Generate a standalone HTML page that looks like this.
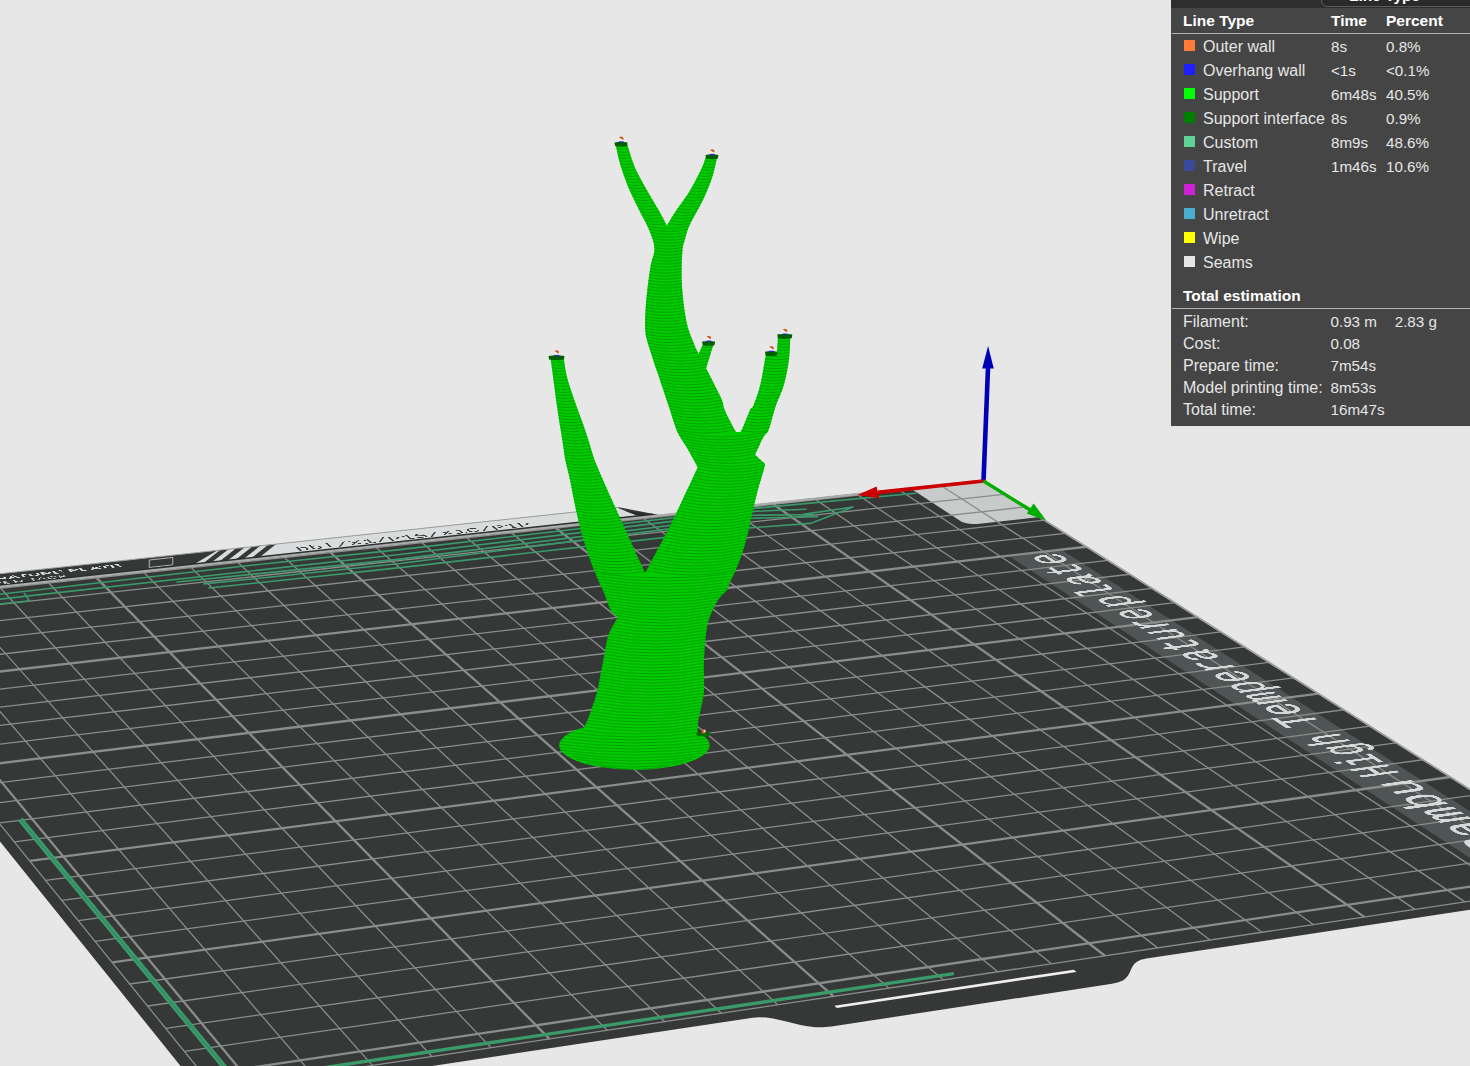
<!DOCTYPE html>
<html><head><meta charset="utf-8"><style>
html,body{margin:0;padding:0;width:1470px;height:1066px;overflow:hidden;}
#root{position:relative;width:1470px;height:1066px;overflow:hidden;background:#e7e7e7;}
body{width:1470px;height:1066px;overflow:hidden;background:#e7e7e7;position:relative;font-family:"Liberation Sans",sans-serif;}
.p3{position:absolute;left:0;top:0;width:2640px;height:2820px;transform-origin:0 0;transform:matrix3d(-0.4468236041,0.0280844401,0,-3.460906695e-05,0.1227333781,0.08839275091,0,-7.627138853e-05,0,0,1,0,982.2217173,470.2475524,0,1.010190839);}
.ov{position:absolute;left:0;top:0;}
#leg{position:absolute;left:1171px;top:0;width:299px;height:426px;background:#454545;color:#e6e6e6;overflow:hidden}
#leg .t{position:absolute;white-space:nowrap;font-size:16px;line-height:16px;}
#leg .b{font-weight:bold;font-size:15.5px;color:#fff}
#leg .sw{position:absolute;width:11px;height:11px;left:13px;}
#leg .n{font-size:15.2px}
</style></head><body><div id="root">
<svg class="ov" width="1470" height="1066" viewBox="0 0 1470 1066"><polygon points="980.98,480.07 659.04,514.93 618.91,507.30 -198.34,594.99 207.71,1099.78 752.72,1017.78 759.57,1017.22 766.31,1017.52 773.00,1018.47 779.70,1019.88 786.46,1021.57 793.35,1023.33 800.42,1024.98 807.71,1026.31 815.28,1027.14 823.17,1027.27 831.42,1026.49 1112.03,983.80 1118.34,982.36 1122.89,980.38 1126.05,977.97 1128.20,975.27 1129.71,972.40 1130.96,969.48 1132.33,966.65 1134.19,964.01 1136.91,961.70 1140.87,959.84 1146.44,958.54 1623.64,886.74" fill="#363838" /><polygon points="637.85,515.87 616.74,507.54 217.18,550.41 194.98,563.77" fill="#d9dcdc" /><polygon points="637.85,515.87 657.64,514.63 624.65,510.85" fill="#2a2c2c" /><polygon points="258.31,558.31 249.95,559.22 267.96,544.96 276.23,544.07" fill="#363838" /><polygon points="242.28,560.05 233.91,560.95 252.08,546.66 260.37,545.77" fill="#363838" /><polygon points="226.22,561.79 217.82,562.69 236.15,548.37 244.47,547.48" fill="#363838" /><polygon points="210.11,563.53 201.69,564.44 220.19,550.08 228.52,549.19" fill="#363838" /><polygon points="610.63,510.42 584.42,513.24 592.70,519.55 618.98,516.71" fill="none" stroke="#363838" stroke-width="1.3"/><polygon points="172.81,557.48 149.40,559.99 149.20,567.47 172.72,564.93" fill="none" stroke="#d0d4d4" stroke-width="0.8"/><polygon points="1062.67,550.58 1009.86,556.66 1541.54,904.93 1602.18,895.78" fill="#4f5555" /><polygon points="980.98,480.07 909.61,487.80 960.83,521.28 960.83,521.28 962.07,521.95 963.66,522.55 965.55,523.07 967.69,523.49 970.00,523.80 972.43,523.99 974.89,524.06 977.30,524.00 979.60,523.81 1039.50,517.11" fill="#c9caca" /><g stroke="#8a8d8b"><line x1="983.55" y1="481.70" x2="1612.61" y2="879.76" stroke-width="1.3"/><line x1="983.55" y1="481.70" x2="-175.91" y2="607.41" stroke-width="1.3"/><line x1="942.12" y1="486.19" x2="1563.81" y2="887.06" stroke-width="1.3"/><line x1="1003.47" y1="494.31" x2="-163.81" y2="622.32" stroke-width="1.3"/><line x1="900.41" y1="490.71" x2="1514.59" y2="894.43" stroke-width="1.3"/><line x1="1023.71" y1="507.11" x2="-151.51" y2="637.48" stroke-width="1.3"/><line x1="858.41" y1="495.26" x2="1464.94" y2="901.87" stroke-width="1.3"/><line x1="1044.26" y1="520.12" x2="-139.00" y2="652.90" stroke-width="1.3"/><line x1="816.11" y1="499.85" x2="1414.86" y2="909.36" stroke-width="1.3"/><line x1="1065.13" y1="533.33" x2="-126.27" y2="668.58" stroke-width="1.3"/><line x1="773.52" y1="504.47" x2="1364.33" y2="916.93" stroke-width="2.3"/><line x1="1086.34" y1="546.74" x2="-113.32" y2="684.55" stroke-width="2.3"/><line x1="730.62" y1="509.12" x2="1313.36" y2="924.56" stroke-width="1.3"/><line x1="1107.88" y1="560.38" x2="-100.14" y2="700.79" stroke-width="1.3"/><line x1="687.42" y1="513.80" x2="1261.94" y2="932.25" stroke-width="1.3"/><line x1="1129.78" y1="574.23" x2="-86.72" y2="717.32" stroke-width="1.3"/><line x1="643.91" y1="518.52" x2="1210.06" y2="940.02" stroke-width="1.3"/><line x1="1152.02" y1="588.31" x2="-73.07" y2="734.15" stroke-width="1.3"/><line x1="600.10" y1="523.27" x2="1157.71" y2="947.86" stroke-width="1.3"/><line x1="1174.64" y1="602.62" x2="-59.17" y2="751.28" stroke-width="1.3"/><line x1="555.96" y1="528.06" x2="1104.89" y2="955.76" stroke-width="2.3"/><line x1="1197.62" y1="617.16" x2="-45.01" y2="768.73" stroke-width="2.3"/><line x1="511.51" y1="532.88" x2="1051.60" y2="963.74" stroke-width="1.3"/><line x1="1220.99" y1="631.95" x2="-30.59" y2="786.49" stroke-width="1.3"/><line x1="466.74" y1="537.73" x2="997.82" y2="971.79" stroke-width="1.3"/><line x1="1244.75" y1="646.98" x2="-15.91" y2="804.59" stroke-width="1.3"/><line x1="421.64" y1="542.62" x2="943.56" y2="979.91" stroke-width="1.3"/><line x1="1268.91" y1="662.27" x2="-0.95" y2="823.03" stroke-width="1.3"/><line x1="376.22" y1="547.55" x2="888.80" y2="988.11" stroke-width="1.3"/><line x1="1293.49" y1="677.83" x2="14.30" y2="841.82" stroke-width="1.3"/><line x1="330.47" y1="552.51" x2="833.53" y2="996.38" stroke-width="2.3"/><line x1="1318.49" y1="693.64" x2="29.83" y2="860.96" stroke-width="2.3"/><line x1="284.37" y1="557.50" x2="777.75" y2="1004.73" stroke-width="1.3"/><line x1="1343.92" y1="709.74" x2="45.67" y2="880.48" stroke-width="1.3"/><line x1="237.94" y1="562.54" x2="721.46" y2="1013.16" stroke-width="1.3"/><line x1="1369.80" y1="726.11" x2="61.82" y2="900.38" stroke-width="1.3"/><line x1="191.17" y1="567.61" x2="664.64" y2="1021.67" stroke-width="1.3"/><line x1="1396.14" y1="742.78" x2="78.28" y2="920.67" stroke-width="1.3"/><line x1="144.05" y1="572.72" x2="607.29" y2="1030.25" stroke-width="1.3"/><line x1="1422.95" y1="759.74" x2="95.07" y2="941.36" stroke-width="1.3"/><line x1="96.58" y1="577.86" x2="549.40" y2="1038.92" stroke-width="2.3"/><line x1="1450.23" y1="777.01" x2="112.20" y2="962.47" stroke-width="2.3"/><line x1="48.76" y1="583.05" x2="490.96" y2="1047.66" stroke-width="1.3"/><line x1="1478.02" y1="794.59" x2="129.68" y2="984.01" stroke-width="1.3"/><line x1="0.58" y1="588.27" x2="431.96" y2="1056.50" stroke-width="1.3"/><line x1="1506.31" y1="812.50" x2="147.51" y2="1005.99" stroke-width="1.3"/><line x1="-47.97" y1="593.54" x2="372.41" y2="1065.41" stroke-width="1.3"/><line x1="1535.13" y1="830.73" x2="165.72" y2="1028.42" stroke-width="1.3"/><line x1="-96.88" y1="598.84" x2="312.28" y2="1074.41" stroke-width="1.3"/><line x1="1564.49" y1="849.31" x2="184.30" y2="1051.33" stroke-width="1.3"/><line x1="-146.16" y1="604.18" x2="251.57" y2="1083.50" stroke-width="2.3"/><line x1="1594.40" y1="868.23" x2="203.28" y2="1074.72" stroke-width="2.3"/><line x1="-175.91" y1="607.41" x2="214.86" y2="1088.99" stroke-width="1.3"/><line x1="1612.61" y1="879.76" x2="214.86" y2="1088.99" stroke-width="1.3"/></g><line x1="1623.64" y1="886.74" x2="980.98" y2="480.07" stroke="#9ea2a0" stroke-width="1.6"/><line x1="653.10" y1="514.22" x2="-189.96" y2="605.40" stroke="#2c2e2e" stroke-width="1.3"/><line x1="981.77" y1="480.57" x2="-188.42" y2="607.32" stroke="#a9acab" stroke-width="2.2"/><line x1="618.91" y1="507.30" x2="-198.34" y2="594.99" stroke="#9ea2a0" stroke-width="1.0"/><g stroke="#3a9a6a" stroke-linejoin="round" stroke-linecap="round"><line x1="20.26" y1="819.32" x2="239.36" y2="1085.33" stroke-width="5.5" stroke-linecap="butt"/><line x1="20.26" y1="819.32" x2="239.36" y2="1085.33" stroke-width="0.8" stroke="#2f7a55" stroke-linecap="butt"/><line x1="235.63" y1="1080.80" x2="952.29" y2="973.81" stroke-width="3.4"/><polyline fill="none" stroke-width="1.6" points="-2,594.5 240,566.5 400,549.6 753.5,508.4 915.9,493.2"/><polyline fill="none" stroke-width="1.6" points="-2,599.4 240,572.2 400,554.5 753.5,511.4 805.9,509.2"/><polyline fill="none" stroke-width="1.6" points="-2,604.2 29.4,600.8 24.5,593.5"/><polyline fill="none" stroke-width="1.6" points="177,582 400,559.1 752,515.2 813.4,514.7"/><polyline fill="none" stroke-width="1.6" points="204,583.9 400,563.5 751.2,518.2 817.8,516.7"/><polyline fill="none" stroke-width="1.6" points="209,588 400,567.6 749,527.9 810.4,523.4 853,507 802.9,514.4"/></g><polygon points="834.30,1005.70 1073.70,969.67 1076.51,971.90 836.91,1008.01" fill="#eeeeee" /></svg>
<div class="p3"><svg width="2640" height="2820" viewBox="-3.0 -12.0 264.0 282.0" style="position:absolute;left:0;top:0"><g transform="translate(156,-3.2) scale(-1,1)"><text x="0" y="0" font-family="Liberation Mono" font-size="4.0" fill="#3a3c3c" textLength="52" lengthAdjust="spacingAndGlyphs">bbl/X1/P1S/X1C/P1P</text></g><g transform="translate(255,-5.4) scale(-1,1)"><text x="0" y="0" font-family="Liberation Sans" font-weight="bold" font-size="2.8" fill="#d8dcdc" textLength="62" lengthAdjust="spacingAndGlyphs">BAMBU HIGH TEMPERATURE PLATE</text></g><g transform="translate(255,-2.4) scale(-1,1)"><text x="0" y="0" font-family="Liberation Sans" font-size="2.4" fill="#c8cccc" textLength="50" lengthAdjust="spacingAndGlyphs">HIGH TEMP PLATE SUPER TACK</text></g><g transform="matrix(0,-1,-1,0,7.7,88.8)"><text x="0" y="0" font-family="Liberation Mono" font-size="11.8" fill="#d5d9d9" stroke="#d5d9d9" stroke-width="0.12" textLength="37.599999999999994" lengthAdjust="spacingAndGlyphs">plate</text></g><g transform="matrix(0,-1,-1,0,7.7,165.9)"><text x="0" y="0" font-family="Liberation Mono" font-size="11.8" fill="#d5d9d9" stroke="#d5d9d9" stroke-width="0.12" textLength="75.5" lengthAdjust="spacingAndGlyphs">Temperature</text></g><g transform="matrix(0,-1,-1,0,7.7,195.2)"><text x="0" y="0" font-family="Liberation Mono" font-size="11.8" fill="#d5d9d9" stroke="#d5d9d9" stroke-width="0.12" textLength="24.399999999999977" lengthAdjust="spacingAndGlyphs">High</text></g><g transform="matrix(0,-1,-1,0,7.7,236.5)"><text x="0" y="0" font-family="Liberation Mono" font-size="11.8" fill="#d5d9d9" stroke="#d5d9d9" stroke-width="0.12" textLength="38.69999999999999" lengthAdjust="spacingAndGlyphs">Bambu</text></g></svg></div>
<svg class="ov" width="1470" height="1066" viewBox="0 0 1470 1066">
<defs>
<pattern id="stripes" width="6" height="3" patternUnits="userSpaceOnUse"><rect width="6" height="3" fill="#00cc00"/><rect y="2.15" width="6" height="0.85" fill="#009a00"/></pattern>
</defs>

<line x1="983.5" y1="481" x2="988" y2="368" stroke="#0000b4" stroke-width="4.6"/>
<path d="M982.2 368.5 L993.8 368.5 L988.1 346 Z" fill="#0000b4"/>
<path d="M983.4 479.2 L983.7 482.8 L878 494.2 L877.7 490.6 Z" fill="#cc0000"/>
<path d="M876.6 486.6 L879.2 498.2 L857.4 495 Z" fill="#cc0000"/>
<path d="M984.3 479.6 L982.6 482.4 L1030.4 511.9 L1032.1 509.1 Z" fill="#00ae00"/>
<path d="M1026.8 513.6 L1033.6 503.4 L1046.2 520.4 Z" fill="#00ae00"/>

<clipPath id="tc"><path d="M615.0 143.5 L627.0 143.5 L628.2 147.4 L629.4 151.4 L630.6 155.3 L631.8 159.2 L633.2 163.1 L634.7 167.0 L636.4 170.8 L638.3 174.6 L640.3 178.3 L642.3 182.0 L644.4 185.7 L646.5 189.4 L648.7 193.2 L651.0 197.2 L653.3 201.1 L655.6 204.9 L657.7 208.5 L659.6 211.7 L661.1 214.5 L662.4 216.9 L663.6 219.1 L664.6 221.2 L665.7 223.3 L666.8 225.5 L668.2 223.3 L669.5 221.2 L670.7 219.1 L672.1 216.8 L673.6 214.4 L675.4 211.7 L677.5 208.6 L679.9 205.3 L682.4 201.7 L685.0 198.1 L687.5 194.4 L689.8 190.7 L692.0 186.9 L694.2 183.0 L696.3 179.0 L698.3 175.1 L700.1 171.5 L701.6 168.3 L702.8 165.7 L703.7 163.5 L704.4 161.5 L704.9 159.7 L705.5 157.9 L706.2 156.0 L718.0 156.0 L718.0 155.8 L718.0 155.4 L718.0 155.0 L717.9 154.8 L717.8 155.2 L717.4 156.5 L716.8 158.8 L716.1 161.9 L715.3 165.6 L714.3 169.6 L713.3 173.7 L712.1 177.5 L710.9 181.1 L709.5 184.8 L708.0 188.5 L706.5 192.2 L704.8 196.0 L703.0 199.9 L700.9 204.0 L698.6 208.4 L696.2 212.8 L693.8 217.1 L691.6 221.1 L689.8 224.8 L688.4 228.0 L687.4 231.0 L686.5 233.7 L685.8 236.1 L685.2 238.4 L684.6 240.6 L684.1 242.4 L683.6 243.6 L683.3 244.7 L683.0 245.9 L682.7 247.6 L682.5 250.0 L682.3 253.3 L682.0 257.3 L681.8 261.7 L681.7 266.3 L681.6 270.9 L681.6 275.3 L681.7 279.5 L681.9 283.8 L682.1 288.0 L682.5 292.2 L682.8 296.5 L683.3 300.7 L683.8 305.0 L684.4 309.4 L685.1 313.8 L685.8 318.1 L686.6 322.2 L687.5 326.0 L688.5 329.6 L689.7 333.0 L690.9 336.3 L692.1 339.3 L693.3 342.1 L694.3 344.6 L695.2 346.7 L695.9 348.4 L696.6 349.8 L697.2 351.1 L697.8 352.5 L698.5 353.9 L703.6 342.9 L702.7 342.5 L714.6 342.5 L713.7 343.7 L706.1 368.2 L708.8 373.5 L711.6 379.0 L714.4 384.6 L717.1 389.9 L719.4 394.6 L721.3 398.6 L722.5 401.5 L723.1 403.5 L723.3 405.0 L723.5 406.3 L723.9 407.8 L724.7 410.0 L726.1 413.0 L727.8 416.7 L729.8 420.6 L731.7 424.3 L733.4 427.6 L734.8 430.0 L735.8 431.4 L736.4 432.0 L736.9 432.1 L737.3 432.0 L737.7 431.9 L738.2 432.0 L738.7 431.9 L739.1 432.0 L739.6 432.1 L740.1 432.0 L740.7 431.4 L741.6 430.0 L742.8 427.5 L744.2 424.1 L745.8 420.2 L747.4 416.2 L748.8 412.7 L750.0 410.0 L750.8 408.5 L751.4 407.9 L751.8 407.7 L752.2 407.5 L752.7 406.9 L753.4 405.4 L754.3 403.1 L755.5 400.2 L756.6 396.9 L757.9 393.3 L759.1 389.3 L760.2 385.1 L761.3 380.2 L762.4 374.4 L763.5 368.3 L764.5 362.5 L765.4 357.5 L766.0 353.9 L766.3 351.9 L766.4 351.1 L766.4 351.2 L766.2 351.7 L766.1 352.1 L766.0 352.2 L777.0 352.2 L778.0 336.0 L777.9 334.4 L791.4 334.4 L791.3 334.4 L791.1 334.2 L791.0 333.9 L790.9 333.9 L790.7 334.5 L790.5 336.1 L790.3 338.8 L790.1 342.3 L790.0 346.5 L789.7 351.0 L789.4 355.5 L788.9 359.8 L788.3 364.0 L787.6 368.2 L786.8 372.6 L785.9 376.9 L784.9 381.1 L783.8 385.1 L782.6 388.9 L781.2 392.6 L779.7 396.2 L778.2 399.7 L776.7 403.3 L775.4 407.0 L774.2 411.0 L773.0 415.2 L771.8 419.4 L770.7 423.5 L769.6 427.1 L768.6 430.0 L767.7 432.0 L766.9 433.1 L766.2 433.8 L765.4 434.5 L764.5 435.4 L763.5 437.0 L762.3 439.3 L760.9 442.1 L759.5 445.2 L758.0 448.4 L756.5 451.6 L755.1 454.7 L765.2 464.0 L765.0 465.0 L764.8 465.9 L764.6 466.8 L764.3 467.8 L764.0 469.1 L763.5 470.8 L762.9 473.0 L762.1 475.6 L761.2 478.4 L760.3 481.4 L759.4 484.6 L758.5 487.7 L757.7 490.8 L756.8 494.1 L756.0 497.4 L755.1 500.9 L754.3 504.4 L753.4 508.0 L752.6 511.7 L751.8 515.6 L750.9 519.6 L750.1 523.6 L749.2 527.6 L748.3 531.6 L747.3 535.6 L746.2 539.7 L745.1 543.8 L743.9 547.8 L742.7 551.7 L741.6 555.2 L740.4 558.5 L739.3 561.6 L738.1 564.5 L736.9 567.2 L735.8 569.8 L734.8 572.1 L733.9 574.2 L733.0 576.0 L732.2 577.6 L731.4 579.1 L730.7 580.5 L730.0 582.0 L729.5 583.4 L729.1 584.8 L728.7 586.1 L728.3 587.3 L727.8 588.6 L727.0 590.0 L726.0 591.3 L724.7 592.5 L723.3 593.7 L721.9 595.1 L720.4 596.8 L718.9 598.8 L717.3 601.3 L715.7 604.3 L713.9 607.5 L712.3 610.9 L710.8 614.3 L709.5 617.5 L708.5 620.5 L707.7 623.4 L707.1 626.3 L706.6 629.3 L706.2 632.6 L705.7 636.3 L705.3 640.4 L704.9 645.0 L704.5 649.8 L704.2 654.7 L704.0 659.6 L703.8 664.4 L703.8 669.1 L703.9 673.8 L704.0 678.5 L704.1 683.2 L704.1 687.9 L703.8 692.6 L703.2 697.3 L702.3 702.0 L701.3 706.7 L700.3 711.3 L699.2 716.0 L698.2 720.7 L697.5 732.5 L697.2 731.9 L701.6 734.3 L705.1 736.9 L707.6 739.7 L709.1 742.5 L709.6 745.3 L709.1 748.2 L707.5 751.0 L705.0 753.7 L701.5 756.3 L697.1 758.8 L691.8 761.0 L685.8 763.1 L679.1 764.9 L671.7 766.5 L663.8 767.8 L655.6 768.7 L647.0 769.4 L638.3 769.7 L629.5 769.6 L620.8 769.3 L612.3 768.6 L604.1 767.6 L596.3 766.3 L589.0 764.7 L582.3 762.9 L576.3 760.8 L571.2 758.5 L566.9 756.0 L563.5 753.4 L561.0 750.7 L559.6 747.9 L559.2 745.0 L559.8 742.2 L561.5 739.4 L564.1 736.7 L567.7 734.1 L572.1 731.6 L577.5 729.4 L583.6 727.3 L583.8 728.3 L584.7 726.2 L585.6 724.2 L586.5 722.3 L587.4 720.2 L588.4 717.8 L589.4 715.1 L590.6 712.0 L591.8 708.5 L593.1 704.8 L594.5 700.9 L595.7 696.8 L596.9 692.6 L597.9 688.2 L598.9 683.6 L599.8 678.8 L600.7 674.0 L601.6 669.2 L602.5 664.4 L603.4 659.6 L604.3 654.7 L605.1 649.8 L606.0 645.0 L607.0 640.4 L608.2 636.3 L609.5 632.6 L611.0 629.3 L612.6 626.3 L614.3 623.4 L615.9 620.5 L617.5 617.5 L616.3 616.3 L615.1 615.3 L613.9 614.3 L612.8 613.1 L611.6 611.7 L610.5 610.0 L609.5 607.9 L608.6 605.6 L607.7 603.1 L606.8 600.3 L605.7 597.3 L604.5 594.1 L603.0 590.6 L601.3 586.9 L599.5 583.0 L597.7 578.9 L595.8 574.5 L594.0 570.1 L592.2 565.4 L590.4 560.5 L588.6 555.4 L586.8 550.3 L585.1 545.1 L583.5 540.0 L582.1 535.0 L580.7 530.0 L579.5 525.0 L578.3 520.0 L577.1 515.0 L576.0 510.0 L574.9 504.9 L573.8 499.6 L572.8 494.4 L571.8 489.3 L570.9 484.4 L570.0 480.0 L569.1 476.1 L568.3 472.5 L567.5 469.3 L566.7 466.2 L566.0 463.1 L565.3 460.0 L564.7 456.9 L564.3 454.0 L563.9 451.2 L563.5 448.2 L563.0 444.9 L562.5 441.3 L561.8 437.2 L561.1 432.6 L560.3 427.8 L559.5 422.9 L558.7 418.0 L558.0 413.2 L557.3 408.5 L556.6 403.7 L556.0 398.9 L555.3 394.1 L554.7 389.5 L554.1 385.0 L553.5 380.4 L552.9 375.7 L552.3 371.1 L551.7 366.8 L551.2 363.1 L550.7 360.3 L550.3 358.5 L550.0 357.6 L549.7 357.3 L549.5 357.2 L549.3 357.2 L549.0 356.9 L564.2 356.9 L564.2 357.5 L564.1 358.0 L564.0 358.4 L564.0 359.1 L564.0 360.0 L564.2 361.4 L564.5 363.3 L564.8 365.6 L565.2 368.2 L565.7 371.0 L566.3 374.0 L567.0 377.1 L567.9 380.3 L568.9 383.7 L570.0 387.2 L571.2 390.9 L572.5 394.7 L573.8 398.5 L575.2 402.5 L576.7 406.7 L578.3 411.0 L579.9 415.2 L581.4 419.4 L582.8 423.3 L584.1 427.0 L585.3 430.5 L586.4 434.0 L587.5 437.3 L588.5 440.5 L589.5 443.6 L590.4 446.5 L591.2 449.2 L591.9 451.8 L592.7 454.4 L593.6 457.1 L594.6 460.0 L595.8 463.0 L597.0 466.0 L598.3 469.1 L599.7 472.5 L601.3 476.0 L603.0 480.0 L605.0 484.4 L607.1 489.3 L609.4 494.4 L611.8 499.6 L614.2 504.9 L616.5 510.0 L618.7 515.0 L620.9 519.9 L623.1 524.8 L625.4 529.8 L627.7 534.8 L630.0 540.0 L632.4 545.3 L634.9 550.8 L637.5 556.4 L640.0 562.0 L642.6 567.5 L645.1 573.1 L647.4 568.8 L649.7 564.5 L651.9 560.2 L654.2 555.9 L656.4 551.7 L658.6 547.6 L660.7 543.7 L662.7 540.0 L664.7 536.3 L666.7 532.6 L668.6 528.9 L670.6 525.0 L672.6 521.0 L674.5 517.0 L676.4 512.8 L678.4 508.6 L680.4 504.2 L682.6 499.5 L684.9 494.5 L687.4 489.3 L690.0 483.9 L692.6 478.3 L695.1 472.8 L697.7 467.4 L696.0 464.3 L694.3 461.1 L692.6 458.0 L690.9 454.9 L689.2 451.8 L687.5 448.8 L685.8 446.0 L684.1 443.4 L682.3 440.8 L680.6 438.1 L679.0 435.3 L677.4 432.0 L675.9 428.3 L674.5 424.3 L673.1 420.0 L671.7 415.7 L670.4 411.3 L669.0 407.0 L667.6 402.9 L666.2 398.8 L664.9 394.7 L663.5 390.5 L662.0 386.2 L660.5 381.7 L658.9 376.8 L657.1 371.6 L655.2 366.2 L653.5 360.9 L651.8 355.8 L650.4 351.3 L649.2 347.4 L648.1 344.2 L647.2 341.1 L646.4 338.1 L645.7 334.8 L645.3 331.0 L645.1 326.6 L645.0 321.8 L645.2 316.7 L645.4 311.4 L645.8 306.1 L646.2 300.7 L646.7 295.1 L647.4 289.1 L648.1 283.1 L648.9 277.2 L649.7 271.7 L650.4 266.9 L651.2 262.9 L652.1 259.6 L653.0 256.7 L653.8 254.1 L654.3 251.4 L654.4 248.5 L654.1 245.5 L653.5 242.5 L652.7 239.5 L651.6 236.4 L650.4 233.3 L649.1 230.1 L647.7 226.8 L646.0 223.3 L644.2 219.8 L642.3 216.3 L640.4 212.7 L638.6 209.1 L636.8 205.4 L635.0 201.7 L633.2 198.0 L631.4 194.2 L629.7 190.4 L628.1 186.7 L626.6 182.9 L625.2 179.2 L623.8 175.4 L622.5 171.6 L621.3 168.0 L620.2 164.4 L619.2 160.8 L618.3 157.0 L617.4 153.2 L616.7 149.8 L616.1 146.9 L615.6 144.7 L615.3 143.4 L615.1 142.9 L615.1 142.9 L615.1 143.2 L615.1 143.5 Z"/></clipPath>
<path d="M615.0 143.5 L627.0 143.5 L628.2 147.4 L629.4 151.4 L630.6 155.3 L631.8 159.2 L633.2 163.1 L634.7 167.0 L636.4 170.8 L638.3 174.6 L640.3 178.3 L642.3 182.0 L644.4 185.7 L646.5 189.4 L648.7 193.2 L651.0 197.2 L653.3 201.1 L655.6 204.9 L657.7 208.5 L659.6 211.7 L661.1 214.5 L662.4 216.9 L663.6 219.1 L664.6 221.2 L665.7 223.3 L666.8 225.5 L668.2 223.3 L669.5 221.2 L670.7 219.1 L672.1 216.8 L673.6 214.4 L675.4 211.7 L677.5 208.6 L679.9 205.3 L682.4 201.7 L685.0 198.1 L687.5 194.4 L689.8 190.7 L692.0 186.9 L694.2 183.0 L696.3 179.0 L698.3 175.1 L700.1 171.5 L701.6 168.3 L702.8 165.7 L703.7 163.5 L704.4 161.5 L704.9 159.7 L705.5 157.9 L706.2 156.0 L718.0 156.0 L718.0 155.8 L718.0 155.4 L718.0 155.0 L717.9 154.8 L717.8 155.2 L717.4 156.5 L716.8 158.8 L716.1 161.9 L715.3 165.6 L714.3 169.6 L713.3 173.7 L712.1 177.5 L710.9 181.1 L709.5 184.8 L708.0 188.5 L706.5 192.2 L704.8 196.0 L703.0 199.9 L700.9 204.0 L698.6 208.4 L696.2 212.8 L693.8 217.1 L691.6 221.1 L689.8 224.8 L688.4 228.0 L687.4 231.0 L686.5 233.7 L685.8 236.1 L685.2 238.4 L684.6 240.6 L684.1 242.4 L683.6 243.6 L683.3 244.7 L683.0 245.9 L682.7 247.6 L682.5 250.0 L682.3 253.3 L682.0 257.3 L681.8 261.7 L681.7 266.3 L681.6 270.9 L681.6 275.3 L681.7 279.5 L681.9 283.8 L682.1 288.0 L682.5 292.2 L682.8 296.5 L683.3 300.7 L683.8 305.0 L684.4 309.4 L685.1 313.8 L685.8 318.1 L686.6 322.2 L687.5 326.0 L688.5 329.6 L689.7 333.0 L690.9 336.3 L692.1 339.3 L693.3 342.1 L694.3 344.6 L695.2 346.7 L695.9 348.4 L696.6 349.8 L697.2 351.1 L697.8 352.5 L698.5 353.9 L703.6 342.9 L702.7 342.5 L714.6 342.5 L713.7 343.7 L706.1 368.2 L708.8 373.5 L711.6 379.0 L714.4 384.6 L717.1 389.9 L719.4 394.6 L721.3 398.6 L722.5 401.5 L723.1 403.5 L723.3 405.0 L723.5 406.3 L723.9 407.8 L724.7 410.0 L726.1 413.0 L727.8 416.7 L729.8 420.6 L731.7 424.3 L733.4 427.6 L734.8 430.0 L735.8 431.4 L736.4 432.0 L736.9 432.1 L737.3 432.0 L737.7 431.9 L738.2 432.0 L738.7 431.9 L739.1 432.0 L739.6 432.1 L740.1 432.0 L740.7 431.4 L741.6 430.0 L742.8 427.5 L744.2 424.1 L745.8 420.2 L747.4 416.2 L748.8 412.7 L750.0 410.0 L750.8 408.5 L751.4 407.9 L751.8 407.7 L752.2 407.5 L752.7 406.9 L753.4 405.4 L754.3 403.1 L755.5 400.2 L756.6 396.9 L757.9 393.3 L759.1 389.3 L760.2 385.1 L761.3 380.2 L762.4 374.4 L763.5 368.3 L764.5 362.5 L765.4 357.5 L766.0 353.9 L766.3 351.9 L766.4 351.1 L766.4 351.2 L766.2 351.7 L766.1 352.1 L766.0 352.2 L777.0 352.2 L778.0 336.0 L777.9 334.4 L791.4 334.4 L791.3 334.4 L791.1 334.2 L791.0 333.9 L790.9 333.9 L790.7 334.5 L790.5 336.1 L790.3 338.8 L790.1 342.3 L790.0 346.5 L789.7 351.0 L789.4 355.5 L788.9 359.8 L788.3 364.0 L787.6 368.2 L786.8 372.6 L785.9 376.9 L784.9 381.1 L783.8 385.1 L782.6 388.9 L781.2 392.6 L779.7 396.2 L778.2 399.7 L776.7 403.3 L775.4 407.0 L774.2 411.0 L773.0 415.2 L771.8 419.4 L770.7 423.5 L769.6 427.1 L768.6 430.0 L767.7 432.0 L766.9 433.1 L766.2 433.8 L765.4 434.5 L764.5 435.4 L763.5 437.0 L762.3 439.3 L760.9 442.1 L759.5 445.2 L758.0 448.4 L756.5 451.6 L755.1 454.7 L765.2 464.0 L765.0 465.0 L764.8 465.9 L764.6 466.8 L764.3 467.8 L764.0 469.1 L763.5 470.8 L762.9 473.0 L762.1 475.6 L761.2 478.4 L760.3 481.4 L759.4 484.6 L758.5 487.7 L757.7 490.8 L756.8 494.1 L756.0 497.4 L755.1 500.9 L754.3 504.4 L753.4 508.0 L752.6 511.7 L751.8 515.6 L750.9 519.6 L750.1 523.6 L749.2 527.6 L748.3 531.6 L747.3 535.6 L746.2 539.7 L745.1 543.8 L743.9 547.8 L742.7 551.7 L741.6 555.2 L740.4 558.5 L739.3 561.6 L738.1 564.5 L736.9 567.2 L735.8 569.8 L734.8 572.1 L733.9 574.2 L733.0 576.0 L732.2 577.6 L731.4 579.1 L730.7 580.5 L730.0 582.0 L729.5 583.4 L729.1 584.8 L728.7 586.1 L728.3 587.3 L727.8 588.6 L727.0 590.0 L726.0 591.3 L724.7 592.5 L723.3 593.7 L721.9 595.1 L720.4 596.8 L718.9 598.8 L717.3 601.3 L715.7 604.3 L713.9 607.5 L712.3 610.9 L710.8 614.3 L709.5 617.5 L708.5 620.5 L707.7 623.4 L707.1 626.3 L706.6 629.3 L706.2 632.6 L705.7 636.3 L705.3 640.4 L704.9 645.0 L704.5 649.8 L704.2 654.7 L704.0 659.6 L703.8 664.4 L703.8 669.1 L703.9 673.8 L704.0 678.5 L704.1 683.2 L704.1 687.9 L703.8 692.6 L703.2 697.3 L702.3 702.0 L701.3 706.7 L700.3 711.3 L699.2 716.0 L698.2 720.7 L697.5 732.5 L697.2 731.9 L701.6 734.3 L705.1 736.9 L707.6 739.7 L709.1 742.5 L709.6 745.3 L709.1 748.2 L707.5 751.0 L705.0 753.7 L701.5 756.3 L697.1 758.8 L691.8 761.0 L685.8 763.1 L679.1 764.9 L671.7 766.5 L663.8 767.8 L655.6 768.7 L647.0 769.4 L638.3 769.7 L629.5 769.6 L620.8 769.3 L612.3 768.6 L604.1 767.6 L596.3 766.3 L589.0 764.7 L582.3 762.9 L576.3 760.8 L571.2 758.5 L566.9 756.0 L563.5 753.4 L561.0 750.7 L559.6 747.9 L559.2 745.0 L559.8 742.2 L561.5 739.4 L564.1 736.7 L567.7 734.1 L572.1 731.6 L577.5 729.4 L583.6 727.3 L583.8 728.3 L584.7 726.2 L585.6 724.2 L586.5 722.3 L587.4 720.2 L588.4 717.8 L589.4 715.1 L590.6 712.0 L591.8 708.5 L593.1 704.8 L594.5 700.9 L595.7 696.8 L596.9 692.6 L597.9 688.2 L598.9 683.6 L599.8 678.8 L600.7 674.0 L601.6 669.2 L602.5 664.4 L603.4 659.6 L604.3 654.7 L605.1 649.8 L606.0 645.0 L607.0 640.4 L608.2 636.3 L609.5 632.6 L611.0 629.3 L612.6 626.3 L614.3 623.4 L615.9 620.5 L617.5 617.5 L616.3 616.3 L615.1 615.3 L613.9 614.3 L612.8 613.1 L611.6 611.7 L610.5 610.0 L609.5 607.9 L608.6 605.6 L607.7 603.1 L606.8 600.3 L605.7 597.3 L604.5 594.1 L603.0 590.6 L601.3 586.9 L599.5 583.0 L597.7 578.9 L595.8 574.5 L594.0 570.1 L592.2 565.4 L590.4 560.5 L588.6 555.4 L586.8 550.3 L585.1 545.1 L583.5 540.0 L582.1 535.0 L580.7 530.0 L579.5 525.0 L578.3 520.0 L577.1 515.0 L576.0 510.0 L574.9 504.9 L573.8 499.6 L572.8 494.4 L571.8 489.3 L570.9 484.4 L570.0 480.0 L569.1 476.1 L568.3 472.5 L567.5 469.3 L566.7 466.2 L566.0 463.1 L565.3 460.0 L564.7 456.9 L564.3 454.0 L563.9 451.2 L563.5 448.2 L563.0 444.9 L562.5 441.3 L561.8 437.2 L561.1 432.6 L560.3 427.8 L559.5 422.9 L558.7 418.0 L558.0 413.2 L557.3 408.5 L556.6 403.7 L556.0 398.9 L555.3 394.1 L554.7 389.5 L554.1 385.0 L553.5 380.4 L552.9 375.7 L552.3 371.1 L551.7 366.8 L551.2 363.1 L550.7 360.3 L550.3 358.5 L550.0 357.6 L549.7 357.3 L549.5 357.2 L549.3 357.2 L549.0 356.9 L564.2 356.9 L564.2 357.5 L564.1 358.0 L564.0 358.4 L564.0 359.1 L564.0 360.0 L564.2 361.4 L564.5 363.3 L564.8 365.6 L565.2 368.2 L565.7 371.0 L566.3 374.0 L567.0 377.1 L567.9 380.3 L568.9 383.7 L570.0 387.2 L571.2 390.9 L572.5 394.7 L573.8 398.5 L575.2 402.5 L576.7 406.7 L578.3 411.0 L579.9 415.2 L581.4 419.4 L582.8 423.3 L584.1 427.0 L585.3 430.5 L586.4 434.0 L587.5 437.3 L588.5 440.5 L589.5 443.6 L590.4 446.5 L591.2 449.2 L591.9 451.8 L592.7 454.4 L593.6 457.1 L594.6 460.0 L595.8 463.0 L597.0 466.0 L598.3 469.1 L599.7 472.5 L601.3 476.0 L603.0 480.0 L605.0 484.4 L607.1 489.3 L609.4 494.4 L611.8 499.6 L614.2 504.9 L616.5 510.0 L618.7 515.0 L620.9 519.9 L623.1 524.8 L625.4 529.8 L627.7 534.8 L630.0 540.0 L632.4 545.3 L634.9 550.8 L637.5 556.4 L640.0 562.0 L642.6 567.5 L645.1 573.1 L647.4 568.8 L649.7 564.5 L651.9 560.2 L654.2 555.9 L656.4 551.7 L658.6 547.6 L660.7 543.7 L662.7 540.0 L664.7 536.3 L666.7 532.6 L668.6 528.9 L670.6 525.0 L672.6 521.0 L674.5 517.0 L676.4 512.8 L678.4 508.6 L680.4 504.2 L682.6 499.5 L684.9 494.5 L687.4 489.3 L690.0 483.9 L692.6 478.3 L695.1 472.8 L697.7 467.4 L696.0 464.3 L694.3 461.1 L692.6 458.0 L690.9 454.9 L689.2 451.8 L687.5 448.8 L685.8 446.0 L684.1 443.4 L682.3 440.8 L680.6 438.1 L679.0 435.3 L677.4 432.0 L675.9 428.3 L674.5 424.3 L673.1 420.0 L671.7 415.7 L670.4 411.3 L669.0 407.0 L667.6 402.9 L666.2 398.8 L664.9 394.7 L663.5 390.5 L662.0 386.2 L660.5 381.7 L658.9 376.8 L657.1 371.6 L655.2 366.2 L653.5 360.9 L651.8 355.8 L650.4 351.3 L649.2 347.4 L648.1 344.2 L647.2 341.1 L646.4 338.1 L645.7 334.8 L645.3 331.0 L645.1 326.6 L645.0 321.8 L645.2 316.7 L645.4 311.4 L645.8 306.1 L646.2 300.7 L646.7 295.1 L647.4 289.1 L648.1 283.1 L648.9 277.2 L649.7 271.7 L650.4 266.9 L651.2 262.9 L652.1 259.6 L653.0 256.7 L653.8 254.1 L654.3 251.4 L654.4 248.5 L654.1 245.5 L653.5 242.5 L652.7 239.5 L651.6 236.4 L650.4 233.3 L649.1 230.1 L647.7 226.8 L646.0 223.3 L644.2 219.8 L642.3 216.3 L640.4 212.7 L638.6 209.1 L636.8 205.4 L635.0 201.7 L633.2 198.0 L631.4 194.2 L629.7 190.4 L628.1 186.7 L626.6 182.9 L625.2 179.2 L623.8 175.4 L622.5 171.6 L621.3 168.0 L620.2 164.4 L619.2 160.8 L618.3 157.0 L617.4 153.2 L616.7 149.8 L616.1 146.9 L615.6 144.7 L615.3 143.4 L615.1 142.9 L615.1 142.9 L615.1 143.2 L615.1 143.5 Z" fill="#00cc00"/>
<path d="M614.9 145.8 Q621.8 147.1 628.8 145.8 M615.5 148.7 Q622.6 150.1 629.7 148.7 M616.2 151.7 Q623.4 153.1 630.6 151.7 M616.8 154.7 Q624.2 156.2 631.5 154.7 M617.5 157.7 Q625.0 159.2 632.4 157.7 M704.5 157.8 Q711.3 159.0 718.0 157.8 M618.3 160.7 Q625.9 162.2 633.4 160.7 M703.5 160.8 Q710.4 162.1 717.3 160.8 M619.1 163.7 Q626.8 165.2 634.5 163.7 M702.4 163.7 Q709.5 165.1 716.7 163.7 M620.0 166.7 Q627.8 168.2 635.7 166.7 M701.2 166.7 Q708.6 168.2 716.0 166.7 M621.0 169.7 Q629.0 171.3 637.1 169.7 M699.8 169.7 Q707.5 171.2 715.2 169.7 M622.0 172.7 Q630.2 174.3 638.5 172.7 M698.3 172.7 Q706.4 174.3 714.4 172.7 M623.0 175.7 Q631.5 177.4 640.1 175.7 M696.8 175.7 Q705.2 177.3 713.6 175.7 M624.1 178.7 Q632.9 180.4 641.7 178.7 M695.3 178.7 Q703.9 180.4 712.6 178.7 M625.2 181.7 Q634.3 183.5 643.3 181.7 M693.7 181.7 Q702.6 183.4 711.5 181.7 M626.4 184.7 Q635.7 186.5 645.0 184.7 M692.1 184.7 Q701.2 186.5 710.4 184.7 M627.7 187.6 Q637.2 189.6 646.7 187.6 M690.4 187.6 Q699.8 189.5 709.2 187.6 M629.0 190.6 Q638.7 192.6 648.4 190.6 M688.6 190.6 Q698.3 192.6 708.0 190.6 M630.3 193.6 Q640.2 195.6 650.1 193.6 M686.7 193.6 Q696.7 195.6 706.7 193.6 M631.7 196.6 Q641.8 198.7 651.9 196.6 M684.7 196.6 Q695.0 198.7 705.3 196.6 M633.2 199.6 Q643.4 201.7 653.7 199.6 M682.6 199.6 Q693.3 201.8 704.0 199.6 M634.6 202.6 Q645.1 204.7 655.5 202.6 M680.5 202.6 Q691.5 204.8 702.5 202.6 M636.1 205.6 Q646.7 207.7 657.3 205.6 M678.4 205.6 Q689.6 207.9 700.9 205.6 M637.6 208.6 Q648.3 210.8 659.0 208.6 M676.2 208.6 Q687.7 210.9 699.2 208.6 M639.1 211.6 Q649.9 213.8 660.8 211.6 M674.2 211.6 Q685.9 213.9 697.6 211.6 M640.6 214.6 Q651.5 216.8 662.4 214.6 M672.3 214.5 Q684.1 217.0 695.9 214.5 M642.2 217.6 Q653.1 219.8 664.0 217.6 M670.4 217.5 Q682.3 220.0 694.3 217.5 M643.8 220.6 Q654.6 222.8 665.5 220.6 M668.6 220.5 Q680.6 223.0 692.7 220.5 M645.3 223.6 Q656.2 225.8 667.0 223.6 M666.7 223.5 Q679.0 226.0 691.2 223.5 M646.8 226.1 Q668.3 230.7 689.9 226.1 M648.1 229.2 Q668.4 233.5 688.7 229.2 M649.3 232.2 Q668.5 236.3 687.7 232.2 M650.4 235.3 Q668.6 239.1 686.8 235.3 M651.5 238.3 Q668.8 242.0 686.0 238.3 M652.4 241.4 Q668.8 244.8 685.2 241.4 M653.0 244.4 Q668.6 247.7 684.2 244.4 M653.4 247.4 Q668.5 250.6 683.7 247.4 M653.3 250.4 Q668.4 253.6 683.4 250.4 M652.8 253.4 Q668.0 256.6 683.2 253.4 M651.9 256.4 Q667.5 259.6 683.0 256.4 M651.0 259.4 Q666.9 262.7 682.9 259.4 M650.2 262.4 Q666.5 265.8 682.8 262.4 M649.6 265.3 Q666.1 268.8 682.7 265.3 M649.1 268.3 Q665.8 271.9 682.6 268.3 M648.6 271.3 Q665.6 274.9 682.6 271.3 M648.2 274.3 Q665.4 277.9 682.6 274.3 M647.8 277.3 Q665.2 281.0 682.7 277.3 M647.4 280.3 Q665.1 284.0 682.8 280.3 M647.0 283.3 Q664.9 287.1 682.9 283.3 M646.6 286.3 Q664.8 290.1 683.1 286.3 M646.3 289.3 Q664.8 293.2 683.3 289.3 M645.9 292.3 Q664.7 296.2 683.5 292.3 M645.6 295.2 Q664.7 299.3 683.8 295.2 M645.4 298.2 Q664.7 302.3 684.1 298.2 M645.1 301.2 Q664.8 305.4 684.5 301.2 M644.9 304.2 Q664.8 308.5 684.8 304.2 M644.7 307.2 Q664.9 311.5 685.2 307.2 M644.5 310.2 Q665.1 314.6 685.7 310.2 M644.3 313.2 Q665.2 317.6 686.1 313.2 M644.2 316.2 Q665.4 320.7 686.6 316.2 M644.1 319.1 Q665.6 323.7 687.2 319.1 M644.0 322.1 Q665.9 326.8 687.8 322.1 M644.1 325.1 Q666.3 329.9 688.5 325.1 M644.2 328.1 Q666.8 332.9 689.3 328.1 M644.4 331.1 Q667.4 336.0 690.3 331.1 M644.8 334.1 Q668.1 339.1 691.4 334.1 M776.9 334.7 Q784.3 336.2 791.6 334.7 M645.3 337.0 Q669.0 342.1 692.6 337.0 M776.9 337.7 Q784.1 339.1 791.4 337.7 M646.1 340.0 Q670.0 345.2 693.8 340.0 M776.7 340.7 Q784.0 342.1 791.2 340.7 M647.1 343.0 Q671.1 348.2 695.1 343.0 M702.1 343.8 Q708.3 345.0 714.6 343.8 M776.5 343.7 Q783.8 345.1 791.1 343.7 M648.0 346.0 Q672.2 351.2 696.3 346.0 M700.7 346.8 Q707.2 348.0 713.7 346.8 M776.3 346.7 Q783.6 348.1 790.9 346.7 M649.0 349.0 Q673.3 354.2 697.6 349.0 M699.3 349.8 Q706.0 351.0 712.7 349.8 M776.1 349.7 Q783.5 351.1 790.8 349.7 M649.9 352.0 Q674.5 357.3 699.1 352.0 M697.9 352.8 Q704.9 354.1 711.8 352.8 M765.2 352.5 Q777.9 355.1 790.6 352.5 M650.9 354.8 Q680.9 361.3 710.9 354.8 M764.6 355.5 Q777.5 358.2 790.3 355.5 M549.4 358.7 Q557.2 360.2 565.0 358.7 M651.8 357.8 Q680.9 364.1 710.0 357.8 M764.1 358.5 Q777.1 361.2 790.0 358.5 M550.0 361.7 Q557.6 363.2 565.3 361.7 M652.8 360.9 Q680.9 366.9 709.0 360.9 M763.6 361.5 Q776.6 364.2 789.6 361.5 M550.4 364.7 Q558.1 366.2 565.7 364.7 M653.8 363.9 Q681.0 369.8 708.1 363.9 M763.1 364.5 Q776.1 367.2 789.1 364.5 M550.8 367.7 Q558.5 369.2 566.1 367.7 M654.9 366.9 Q681.0 372.6 707.2 366.9 M762.6 367.5 Q775.6 370.2 788.6 367.5 M551.2 370.7 Q559.0 372.2 566.7 370.7 M655.9 369.9 Q682.2 375.6 708.5 369.9 M762.0 370.5 Q775.1 373.2 788.1 370.5 M551.6 373.7 Q559.5 375.2 567.3 373.7 M656.9 372.9 Q683.5 378.7 710.0 372.9 M761.5 373.5 Q774.5 376.2 787.5 373.5 M552.0 376.7 Q560.0 378.3 568.0 376.7 M657.9 375.9 Q684.7 381.7 711.6 375.9 M760.9 376.5 Q773.9 379.2 786.8 376.5 M552.4 379.7 Q560.6 381.3 568.8 379.7 M658.9 378.9 Q686.0 384.7 713.1 378.9 M760.3 379.5 Q773.2 382.2 786.1 379.5 M552.8 382.7 Q561.3 384.4 569.7 382.7 M659.9 381.9 Q687.3 387.8 714.6 381.9 M759.7 382.5 Q772.5 385.2 785.4 382.5 M553.2 385.7 Q561.9 387.4 570.6 385.7 M660.9 384.9 Q688.5 390.8 716.2 384.9 M759.0 385.5 Q771.7 388.1 784.5 385.5 M553.6 388.7 Q562.6 390.5 571.6 388.7 M661.9 387.9 Q689.8 393.9 717.7 387.9 M758.2 388.5 Q770.9 391.1 783.5 388.5 M554.1 391.7 Q563.3 393.5 572.6 391.7 M663.0 390.9 Q691.1 396.9 719.2 390.9 M757.3 391.5 Q769.8 394.1 782.4 391.5 M554.5 394.6 Q564.0 396.6 573.6 394.6 M664.0 393.9 Q692.3 400.0 720.6 393.9 M756.3 394.5 Q768.7 397.1 781.2 394.5 M554.9 397.6 Q564.7 399.6 574.6 397.6 M665.0 396.8 Q693.5 403.0 722.0 396.8 M755.3 397.5 Q767.6 400.1 779.9 397.5 M555.3 400.6 Q565.5 402.7 575.7 400.6 M666.0 399.8 Q694.6 406.0 723.3 399.8 M754.1 400.5 Q766.4 403.1 778.7 400.5 M555.7 403.6 Q566.2 405.7 576.7 403.6 M667.0 402.8 Q695.6 409.0 724.2 402.8 M753.0 403.5 Q765.2 406.1 777.5 403.5 M556.1 406.6 Q567.0 408.8 577.8 406.6 M668.0 405.9 Q696.3 412.0 724.7 405.9 M751.6 406.5 Q764.0 409.1 776.4 406.5 M556.5 409.6 Q567.7 411.9 578.9 409.6 M669.0 408.9 Q697.3 415.0 725.7 408.9 M749.0 409.5 Q762.2 412.2 775.5 409.5 M557.0 412.6 Q568.5 414.9 580.1 412.6 M669.9 411.8 Q698.5 418.0 727.1 411.8 M747.7 412.5 Q761.1 415.3 774.6 412.5 M557.4 415.5 Q569.3 418.0 581.2 415.5 M670.9 414.8 Q699.7 421.1 728.5 414.8 M746.5 415.5 Q760.1 418.3 773.7 415.5 M557.9 418.5 Q570.1 421.0 582.3 418.5 M671.8 417.8 Q700.9 424.1 730.0 417.8 M745.3 418.5 Q759.1 421.3 772.9 418.5 M558.4 421.5 Q570.9 424.1 583.3 421.5 M672.7 420.8 Q702.1 427.2 731.5 420.8 M744.1 421.5 Q758.1 424.4 772.1 421.5 M558.9 424.5 Q571.6 427.1 584.4 424.5 M673.7 423.8 Q703.4 430.2 733.0 423.8 M742.8 424.4 Q757.0 427.4 771.2 424.4 M559.3 427.5 Q572.4 430.2 585.4 427.5 M674.8 426.8 Q704.7 433.3 734.7 426.8 M741.5 427.4 Q755.9 430.4 770.3 427.4 M559.8 430.5 Q573.1 433.2 586.4 430.5 M676.0 429.8 Q706.2 436.3 736.5 429.8 M740.0 430.4 Q754.6 433.5 769.1 430.4 M560.3 433.5 Q573.9 436.3 587.4 433.5 M677.4 432.2 Q722.2 441.8 766.9 432.2 M560.8 436.5 Q574.6 439.3 588.4 436.5 M679.0 435.2 Q721.7 444.6 764.5 435.2 M561.3 439.5 Q575.3 442.4 589.3 439.5 M680.8 438.3 Q721.9 447.3 763.0 438.3 M561.8 442.4 Q576.0 445.4 590.3 442.4 M682.8 441.4 Q722.2 450.0 761.5 441.4 M562.2 445.4 Q576.7 448.5 591.2 445.4 M684.8 444.5 Q722.5 452.7 760.1 444.5 M562.6 448.4 Q577.4 451.5 592.1 448.4 M686.6 447.5 Q722.7 455.4 758.7 447.5 M563.0 451.4 Q578.0 454.5 593.0 451.4 M688.3 450.6 Q722.8 458.1 757.4 450.6 M563.4 454.4 Q578.7 457.6 593.9 454.4 M690.0 453.6 Q723.2 460.9 756.4 453.6 M563.9 457.4 Q579.4 460.6 594.9 457.4 M691.6 456.6 Q725.6 464.0 759.7 456.6 M564.5 460.4 Q580.2 463.7 596.0 460.4 M693.2 459.6 Q728.1 467.2 762.9 459.6 M565.2 463.4 Q581.2 466.7 597.1 463.4 M694.8 462.5 Q730.5 470.3 766.2 462.5 M565.9 466.4 Q582.1 469.8 598.4 466.4 M696.5 465.6 Q731.0 473.1 765.5 465.6 M566.6 469.3 Q583.1 472.8 599.6 469.3 M695.5 468.6 Q730.1 476.1 764.7 468.6 M567.4 472.3 Q584.2 475.9 600.9 472.3 M694.1 471.6 Q729.0 479.2 763.9 471.6 M568.1 475.3 Q585.2 478.9 602.2 475.3 M692.7 474.6 Q727.8 482.2 762.9 474.6 M568.8 478.3 Q586.2 482.0 603.6 478.3 M691.2 477.6 Q726.6 485.3 762.0 477.6 M569.4 481.3 Q587.1 485.0 604.9 481.3 M689.8 480.5 Q725.5 488.3 761.1 480.5 M570.0 484.3 Q588.1 488.1 606.2 484.3 M688.4 483.5 Q724.3 491.4 760.3 483.5 M570.6 487.3 Q589.1 491.2 607.6 487.3 M687.0 486.5 Q723.2 494.4 759.4 486.5 M571.2 490.2 Q590.0 494.3 608.9 490.2 M685.6 489.5 Q722.1 497.5 758.6 489.5 M571.8 493.2 Q591.0 497.3 610.3 493.2 M684.2 492.5 Q721.0 500.5 757.8 492.5 M572.3 496.2 Q592.0 500.4 611.6 496.2 M682.8 495.5 Q719.9 503.6 757.1 495.5 M572.9 499.2 Q592.9 503.5 613.0 499.2 M681.4 498.5 Q718.8 506.6 756.3 498.5 M573.5 502.2 Q593.9 506.5 614.3 502.2 M680.0 501.5 Q717.8 509.7 755.6 501.5 M574.1 505.2 Q594.9 509.6 615.7 505.2 M678.6 504.4 Q716.7 512.8 754.9 504.4 M574.8 508.2 Q595.9 512.7 617.0 508.2 M677.2 507.4 Q715.7 515.8 754.2 507.4 M575.5 511.1 Q596.9 515.7 618.4 511.1 M675.8 510.4 Q714.7 518.9 753.5 510.4 M576.1 514.1 Q597.9 518.8 619.7 514.1 M674.4 513.4 Q713.6 522.0 752.9 513.4 M576.8 517.1 Q599.0 521.8 621.1 517.1 M673.0 516.4 Q712.6 525.0 752.3 516.4 M577.5 520.1 Q600.0 524.9 622.4 520.1 M671.6 519.4 Q711.6 528.1 751.7 519.4 M578.2 523.1 Q601.0 528.0 623.8 523.1 M670.1 522.3 Q710.6 531.2 751.0 522.3 M579.0 526.1 Q602.1 531.0 625.1 526.1 M668.6 525.3 Q709.5 534.3 750.4 525.3 M579.7 529.1 Q603.1 534.1 626.5 529.1 M667.0 528.3 Q708.4 537.3 749.7 528.3 M580.5 532.0 Q604.2 537.1 627.8 532.0 M665.5 531.3 Q707.2 540.4 748.9 531.3 M581.3 535.0 Q605.3 540.2 629.2 535.0 M663.9 534.3 Q706.0 543.5 748.2 534.3 M582.2 538.0 Q606.4 543.2 630.5 538.0 M662.2 537.3 Q704.8 546.6 747.4 537.3 M583.1 541.0 Q607.5 546.3 631.9 541.0 M660.6 540.2 Q703.6 549.6 746.6 540.2 M584.1 544.0 Q608.7 549.3 633.3 544.0 M659.0 543.2 Q702.4 552.7 745.7 543.2 M585.0 547.0 Q609.8 552.3 634.6 547.0 M657.4 546.2 Q701.1 555.8 744.8 546.2 M586.0 550.0 Q611.0 555.4 636.0 550.0 M655.8 549.2 Q699.9 558.8 743.9 549.2 M587.1 553.0 Q612.2 558.4 637.4 553.0 M654.2 552.2 Q698.6 561.8 743.0 552.2 M588.1 556.0 Q613.4 561.4 638.7 556.0 M652.6 555.2 Q697.3 564.8 742.0 555.2 M589.2 559.0 Q614.7 564.5 640.1 559.0 M651.0 558.2 Q696.0 567.8 740.9 558.2 M590.3 562.0 Q615.9 567.5 641.5 562.0 M649.4 561.2 Q694.6 570.8 739.7 561.2 M591.4 565.0 Q617.1 570.5 642.9 565.0 M647.9 564.2 Q693.2 573.8 738.4 564.2 M592.6 568.0 Q618.4 573.5 644.2 568.0 M646.3 567.2 Q691.7 576.8 737.2 567.2 M593.8 571.0 Q619.7 576.5 645.6 571.0 M644.7 570.2 Q690.3 579.8 735.8 570.2 M595.0 573.2 Q664.7 582.8 734.5 573.2 M596.3 576.2 Q664.6 585.8 733.0 576.2 M597.6 579.2 Q664.5 588.8 731.5 579.2 M599.0 582.2 Q664.6 591.8 730.3 582.2 M600.4 585.2 Q664.9 594.8 729.4 585.2 M601.7 588.2 Q664.9 597.8 728.0 588.2 M603.0 591.2 Q664.1 600.8 725.2 591.2 M604.2 594.2 Q663.2 603.8 722.1 594.2 M605.3 597.2 Q662.6 606.8 719.8 597.2 M606.4 600.2 Q662.2 609.8 718.0 600.2 M607.4 603.2 Q661.8 612.8 716.3 603.2 M608.5 606.2 Q661.6 615.8 714.7 606.2 M610.1 609.2 Q661.7 618.8 713.2 609.2 M612.7 612.2 Q662.3 621.8 711.9 612.2 M616.0 615.2 Q663.3 624.8 710.7 615.2 M615.2 618.2 Q662.4 627.8 709.7 618.2 M613.5 621.2 Q661.2 630.8 708.9 621.2 M611.8 624.2 Q660.0 633.8 708.2 624.2 M610.2 627.2 Q658.9 636.8 707.7 627.2 M608.8 630.2 Q658.0 639.8 707.2 630.2 M607.7 633.2 Q657.3 642.8 706.9 633.2 M606.7 636.2 Q656.6 645.8 706.5 636.2 M605.9 639.2 Q656.1 648.8 706.2 639.2 M605.2 642.2 Q655.6 651.8 705.9 642.2 M604.6 645.2 Q655.2 654.8 705.7 645.2 M604.1 648.2 Q654.8 657.8 705.5 648.2 M603.6 651.2 Q654.4 660.8 705.3 651.2 M603.0 654.2 Q654.1 663.8 705.2 654.2 M602.5 657.2 Q653.8 666.8 705.0 657.2 M602.0 660.2 Q653.4 669.8 704.9 660.2 M601.4 663.2 Q653.1 672.8 704.8 663.2 M600.8 666.2 Q652.8 675.8 704.8 666.2 M600.2 669.2 Q652.5 678.8 704.8 669.2 M599.7 672.2 Q652.3 681.8 704.9 672.2 M599.1 675.2 Q652.1 684.8 705.0 675.2 M598.6 678.2 Q651.8 687.8 705.1 678.2 M598.0 681.2 Q651.6 690.8 705.1 681.2 M597.4 684.2 Q651.3 693.8 705.1 684.2 M596.8 687.2 Q650.9 696.8 705.0 687.2 M596.0 690.2 Q650.4 699.8 704.8 690.2 M595.2 693.2 Q649.9 702.8 704.5 693.2 M594.4 696.2 Q649.2 705.8 704.1 696.2 M593.4 699.2 Q648.5 708.8 703.5 699.2 M592.4 702.2 Q647.7 711.8 702.9 702.2 M591.4 705.2 Q646.8 714.8 702.3 705.2 M590.3 708.2 Q645.9 717.8 701.6 708.2 M589.2 711.2 Q645.0 720.8 700.9 711.2 M588.1 714.2 Q644.1 723.8 700.2 714.2 M586.9 717.2 Q643.2 726.8 699.6 717.2 M585.6 720.2 Q642.4 729.8 699.1 720.2 M584.3 723.2 Q641.6 732.8 698.9 723.2 M580.5 728.0 Q582.6 728.2 584.7 728.0 M582.9 726.2 Q640.8 735.8 698.8 726.2 M572.6 729.2 Q635.6 738.8 698.6 729.2 M566.8 732.2 Q634.4 741.8 702.0 732.2 M562.7 735.2 Q634.4 744.8 706.1 735.2 M560.1 738.2 Q634.4 747.8 708.8 738.2 M558.6 741.2 Q634.4 750.8 710.2 741.2 M558.3 744.2 Q634.4 753.8 710.5 744.2 M559.2 747.2 Q634.4 756.8 709.6 747.2 M561.2 750.2 Q634.4 759.8 707.6 750.2 M564.5 753.2 Q634.4 762.8 704.3 753.2 M569.3 756.2 Q634.4 765.8 699.5 756.2 M575.9 759.2 Q634.4 768.8 693.0 759.2 M585.3 762.2 Q634.4 771.8 683.5 762.2 M599.3 765.6 Q634.4 773.2 669.5 765.6" fill="none" stroke="#009a00" stroke-width="0.85" clip-path="url(#tc)"/>
<path d="M614.5 142.4 Q621.0 141.0 627.5 142.4 L626.9 146.0 Q621.0 147.2 615.1 146.0 Z" fill="#005f00"/><circle cx="621.3" cy="139.0" r="2.7" fill="#f2efec"/><path d="M618.9 137.4 Q621.5 135.4 623.6 138.0 L623.3 140.0 L621.0 138.8 Z" fill="#c8602a"/><rect x="618.8" y="141.3" width="4.8" height="1.3" fill="#2a2ad0"/><path d="M705.5 155.0 Q712.0 153.6 718.5 155.0 L717.9 158.6 Q712.0 159.8 706.1 158.6 Z" fill="#005f00"/><circle cx="712.3" cy="151.6" r="2.7" fill="#f2efec"/><path d="M709.9 150.0 Q712.5 148.0 714.6 150.6 L714.3 152.6 L712.0 151.4 Z" fill="#c8602a"/><rect x="709.8" y="153.9" width="4.8" height="1.3" fill="#2a2ad0"/><path d="M548.5 356.0 Q556.5 354.6 564.5 356.0 L563.9 359.6 Q556.5 360.8 549.1 359.6 Z" fill="#005f00"/><circle cx="556.8" cy="352.6" r="2.7" fill="#f2efec"/><path d="M554.4 351.0 Q557.0 349.0 559.1 351.6 L558.8 353.6 L556.5 352.4 Z" fill="#c8602a"/><rect x="554.3" y="354.9" width="4.8" height="1.3" fill="#2a2ad0"/><path d="M702.1 341.6 Q708.6 340.2 715.1 341.6 L714.5 345.2 Q708.6 346.4 702.7 345.2 Z" fill="#005f00"/><circle cx="708.9" cy="338.2" r="2.7" fill="#f2efec"/><path d="M706.5 336.6 Q709.1 334.6 711.2 337.2 L710.9 339.2 L708.6 338.0 Z" fill="#c8602a"/><rect x="706.4" y="340.5" width="4.8" height="1.3" fill="#2a2ad0"/><path d="M765.0 351.8 Q771.3 350.4 777.5 351.8 L776.9 355.4 Q771.3 356.6 765.6 355.4 Z" fill="#005f00"/><circle cx="771.6" cy="348.4" r="2.7" fill="#f2efec"/><path d="M769.2 346.8 Q771.8 344.8 773.9 347.4 L773.6 349.4 L771.3 348.2 Z" fill="#c8602a"/><rect x="769.1" y="350.7" width="4.8" height="1.3" fill="#2a2ad0"/><path d="M777.3 334.6 Q784.8 333.2 792.3 334.6 L791.7 338.2 Q784.8 339.4 777.9 338.2 Z" fill="#005f00"/><circle cx="785.1" cy="331.2" r="2.7" fill="#f2efec"/><path d="M782.7 329.6 Q785.3 327.6 787.4 330.2 L787.1 332.2 L784.8 331.0 Z" fill="#c8602a"/><rect x="782.6" y="333.5" width="4.8" height="1.3" fill="#2a2ad0"/><ellipse cx="703.5" cy="734" rx="7.5" ry="2.6" fill="#006a00"/><circle cx="703.8" cy="731.4" r="2.2" fill="#e06030"/><circle cx="704.6" cy="731" r="1" fill="#f4f0ec"/>
</svg>
<div id="leg"><div style="position:absolute;left:0;top:0;width:299px;height:8px;background:#2e2e2e"></div><div style="position:absolute;left:150px;top:-14px;width:160px;height:19px;background:#2a2a2a;border:1px solid #5a5a5a;border-radius:6px"></div><div class="t b" style="left:178px;top:-11.6px">Line Type</div><div class="t b" style="left:12px;top:12.9px;">Line Type</div><div class="t b" style="left:160px;top:12.9px;">Time</div><div class="t b" style="left:215px;top:12.9px;">Percent</div><div style="position:absolute;left:1px;top:32.5px;width:298px;height:1.2px;background:#b4b4b4"></div><div class="sw" style="top:40.1px;background:#ff7d38"></div><div class="t" style="left:32px;top:38.9px;">Outer wall</div><div class="t n" style="left:160px;top:38.9px;">8s</div><div class="t n" style="left:215px;top:38.9px;">0.8%</div><div class="sw" style="top:64.1px;background:#1f1fff"></div><div class="t" style="left:32px;top:62.9px;">Overhang wall</div><div class="t n" style="left:160px;top:62.9px;">&lt;1s</div><div class="t n" style="left:215px;top:62.9px;">&lt;0.1%</div><div class="sw" style="top:88.1px;background:#00ff00"></div><div class="t" style="left:32px;top:86.9px;">Support</div><div class="t n" style="left:160px;top:86.9px;">6m48s</div><div class="t n" style="left:215px;top:86.9px;">40.5%</div><div class="sw" style="top:112.1px;background:#008000"></div><div class="t" style="left:32px;top:110.9px;">Support interface</div><div class="t n" style="left:160px;top:110.9px;">8s</div><div class="t n" style="left:215px;top:110.9px;">0.9%</div><div class="sw" style="top:136.1px;background:#5ed194"></div><div class="t" style="left:32px;top:134.9px;">Custom</div><div class="t n" style="left:160px;top:134.9px;">8m9s</div><div class="t n" style="left:215px;top:134.9px;">48.6%</div><div class="sw" style="top:160.1px;background:#38489b"></div><div class="t" style="left:32px;top:158.9px;">Travel</div><div class="t n" style="left:160px;top:158.9px;">1m46s</div><div class="t n" style="left:215px;top:158.9px;">10.6%</div><div class="sw" style="top:184.1px;background:#cd22d6"></div><div class="t" style="left:32px;top:182.9px;">Retract</div><div class="sw" style="top:208.1px;background:#49adcf"></div><div class="t" style="left:32px;top:206.9px;">Unretract</div><div class="sw" style="top:232.1px;background:#ffff00"></div><div class="t" style="left:32px;top:230.9px;">Wipe</div><div class="sw" style="top:256.1px;background:#e6e6e6"></div><div class="t" style="left:32px;top:254.9px;">Seams</div><div class="t b" style="left:12px;top:288.0px;">Total estimation</div><div style="position:absolute;left:1px;top:308px;width:298px;height:1.2px;background:#b4b4b4"></div><div class="t" style="left:12px;top:314.4px;">Filament:</div><div class="t n" style="left:159.5px;top:314.4px;">0.93 m</div><div class="t" style="left:12px;top:336.4px;">Cost:</div><div class="t n" style="left:159.5px;top:336.4px;">0.08</div><div class="t" style="left:12px;top:358.4px;">Prepare time:</div><div class="t n" style="left:159.5px;top:358.4px;">7m54s</div><div class="t" style="left:12px;top:380.4px;">Model printing time:</div><div class="t n" style="left:159.5px;top:380.4px;">8m53s</div><div class="t" style="left:12px;top:402.4px;">Total time:</div><div class="t n" style="left:159.5px;top:402.4px;">16m47s</div><div class="t n" style="left:223.7px;top:314.4px;">2.83 g</div></div>
</div></body></html>
